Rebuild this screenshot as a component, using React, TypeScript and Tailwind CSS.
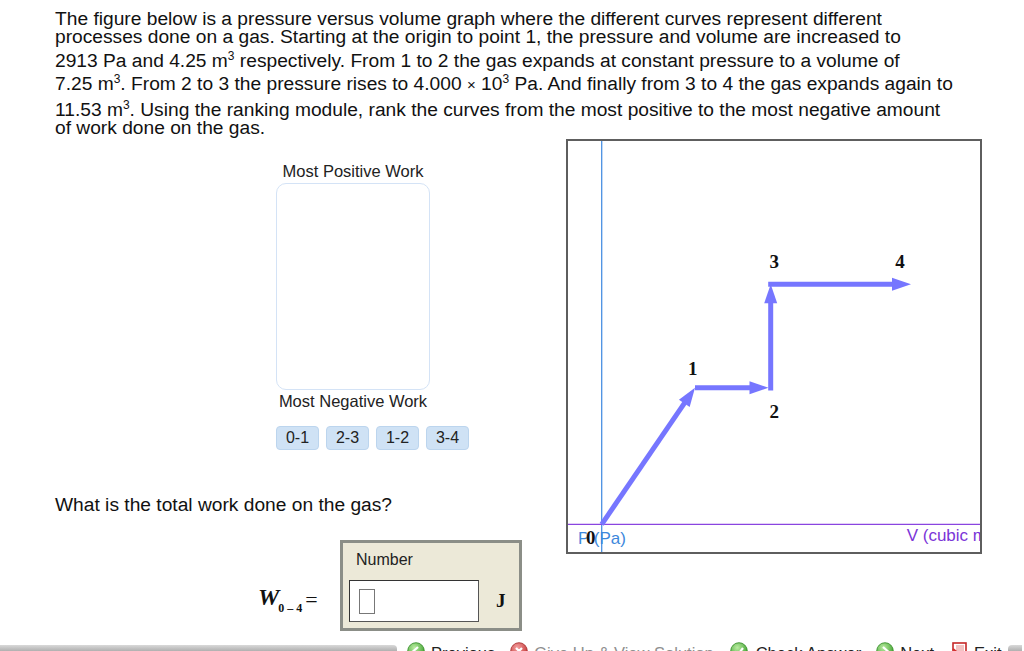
import React from "react";

const ARROW = "#7676ff";

type Seg = { x1: number; y1: number; x2: number; y2: number };

// Thick line ending in a filled triangular head at (x2, y2)
function Arrow({ x1, y1, x2, y2 }: Seg) {
  const len = 19;
  const half = 6.5;
  const dx = x2 - x1;
  const dy = y2 - y1;
  const L = Math.hypot(dx, dy);
  const ux = dx / L;
  const uy = dy / L;
  const bx = x2 - ux * len;
  const by = y2 - uy * len;
  const px = -uy * half;
  const py = ux * half;
  return (
    <g>
      <line
        x1={x1}
        y1={y1}
        x2={x2 - ux * (len - 3)}
        y2={y2 - uy * (len - 3)}
        stroke={ARROW}
        strokeWidth={5}
      />
      <polygon
        points={`${x2},${y2} ${bx + px},${by + py} ${bx - px},${by - py}`}
        fill={ARROW}
      />
    </g>
  );
}

function PVGraph() {
  return (
    <div className="w-[416px] h-[415px] border-2 border-[#5e5e5e] bg-white overflow-hidden shrink-0">
      <svg width="412" height="411" viewBox="0 0 412 411" className="block">
        <line x1="33.7" y1="0" x2="33.7" y2="411" stroke="#4a90e2" strokeWidth="1.3" />
        <line x1="0" y1="383.3" x2="412" y2="383.3" stroke="#8a45e0" strokeWidth="1.3" />
        <Arrow x1={33.7} y1={383.3} x2={127} y2={246.7} />
        <Arrow x1={127} y1={246.7} x2={200.5} y2={246.7} />
        <Arrow x1={202.7} y1={249.5} x2={202.7} y2={143.3} />
        <Arrow x1={200.2} y1={143.3} x2={343} y2={143.3} />
        <g fontFamily="'Liberation Serif', 'Times New Roman', serif" fontWeight="700" fontSize="19" fill="#111" textAnchor="middle">
          <text x="124.7" y="233.5">1</text>
          <text x="206.3" y="277.4">2</text>
          <text x="206.3" y="127.4">3</text>
          <text x="332" y="127.4">4</text>
        </g>
        <text x="10" y="402.8" fontFamily="'Liberation Sans', Arial, sans-serif" fontSize="17" fill="#3d87dc">
          P (Pa)
        </text>
        {/* origin label sits on a white chip over the axis caption */}
        <rect x="18.7" y="388" width="8.3" height="17" fill="#fff" />
        <text x="22.8" y="402.5" textAnchor="middle" fontFamily="'Liberation Serif', 'Times New Roman', serif" fontWeight="700" fontSize="19" fill="#111">
          0
        </text>
        <text x="338.7" y="400" fontFamily="'Liberation Sans', Arial, sans-serif" fontSize="17" fill="#7b35d8">
          V (cubic m)
        </text>
      </svg>
    </div>
  );
}

function Sup({ children }: { children: React.ReactNode }) {
  return <span className="relative -top-[7px] text-[12px] leading-none">{children}</span>;
}

function RoundIcon({ kind }: { kind: "prev" | "giveup" | "check" | "next" }) {
  const red = kind === "giveup";
  const id = `g-${kind}`;
  return (
    <svg width="18" height="18" viewBox="0 0 18 18" className="shrink-0">
      <defs>
        <radialGradient id={id} cx="40%" cy="30%" r="70%">
          <stop offset="0%" stopColor={red ? "#f4a0a0" : "#b9eba0"} />
          <stop offset="100%" stopColor={red ? "#c23434" : "#3c9f2c"} />
        </radialGradient>
      </defs>
      <circle cx="9" cy="9" r="8.3" fill={`url(#${id})`} stroke={red ? "#a52a2a" : "#2f8a22"} strokeWidth="0.8" />
      {kind === "prev" && <path d="M11 5 L6.5 9 L11 13" fill="none" stroke="#fff" strokeWidth="2.2" />}
      {kind === "next" && <path d="M7 5 L11.5 9 L7 13" fill="none" stroke="#fff" strokeWidth="2.2" />}
      {kind === "check" && <path d="M5 9.5 L8 12.5 L13 6" fill="none" stroke="#fff" strokeWidth="2.2" />}
      {kind === "giveup" && <path d="M6 6 L12 12 M12 6 L6 12" fill="none" stroke="#fff" strokeWidth="2.2" />}
    </svg>
  );
}

function ExitIcon() {
  return (
    <svg width="21" height="20" viewBox="0 0 21 20" className="shrink-0">
      <rect x="6" y="1" width="13" height="17" fill="#fff" stroke="#c62828" strokeWidth="1.6" />
      <rect x="9" y="3" width="8" height="13" fill="#f3c2c2" />
      <path d="M1 10 H9 M6 7 L9.5 10 L6 13" fill="none" stroke="#d32f2f" strokeWidth="2.2" />
    </svg>
  );
}

export default function App() {
  return (
    <div className="w-[1024px] h-[651px] overflow-hidden bg-white text-[#111] font-['Liberation_Sans',Arial,sans-serif]">
      <div className="pl-[55px]">
        {/* Problem statement */}
        <div className="pt-[10px] text-[19.2px] leading-[18px] whitespace-nowrap">
          <div>The figure below is a pressure versus volume graph where the different curves represent different</div>
          <div>processes done on a gas. Starting at the origin to point 1, the pressure and volume are increased to</div>
          <div className="mt-[6px]">
            2913 Pa and 4.25 m<Sup>3</Sup> respectively. From 1 to 2 the gas expands at constant pressure to a volume of
          </div>
          <div className="mt-[5px]">
            7.25 m<Sup>3</Sup>. From 2 to 3 the pressure rises to 4.000 <span className="text-[15px]">×</span> 10<Sup>3</Sup> Pa. And finally from 3 to 4 the gas expands again to
          </div>
          <div className="mt-[7px]">
            11.53 m<Sup>3</Sup>. Using the ranking module, rank the curves from the most positive to the most negative amount
          </div>
          <div>of work done on the gas.</div>
        </div>

        <div className="flex mt-[2px]">
          {/* Ranking module and answer entry */}
          <div className="w-[511px] shrink-0">
            <div className="ml-[221px] mt-[22px] w-[154px] flex flex-col items-center text-[16.5px] leading-[20px] text-[#222]">
              <div className="whitespace-nowrap">Most Positive Work</div>
              <div className="mt-[2px] w-[154px] h-[207px] rounded-[10px] border border-[#d4e3f6] bg-white" />
              <div className="mt-[1px] whitespace-nowrap">Most Negative Work</div>
            </div>
            <div className="ml-[221px] mt-[15px] flex gap-[7px]">
              {["0-1", "2-3", "1-2", "3-4"].map((c) => (
                <div
                  key={c}
                  className="w-[43px] h-[24px] rounded-[4px] border border-[#bcd5ee] bg-[#cfe2f5] flex items-center justify-center text-[16px] text-[#222]"
                >
                  {c}
                </div>
              ))}
            </div>

            <div className="mt-[44px] text-[19.2px] leading-[22px] whitespace-nowrap">
              What is the total work done on the gas?
            </div>

            <div className="mt-[24px] flex items-center">
              <div className="ml-[203px] w-[82px] mt-[22px] flex items-baseline font-['Liberation_Serif','Times_New_Roman',serif] font-bold">
                <span className="italic text-[24px]">W</span>
                <span className="relative top-[7px] text-[12px] -ml-[1px]">0 – 4</span>
                <span className="relative top-[2px] text-[22px] font-normal ml-[3px]">=</span>
              </div>
              <div className="w-[182px] h-[91px] border-[3px] border-[#8b8e87] bg-[#ece9d8] pl-[6px] pt-[8px]">
                <div className="ml-[7px] text-[16px] leading-[18px] text-[#222]">Number</div>
                <div className="mt-[11px] flex items-center">
                  <div className="w-[130px] h-[42px] bg-white border border-[#555] border-t-[#333] border-l-[#333] flex items-center pl-[9px]">
                    <div className="w-[16px] h-[25px] border border-[#777] bg-white" />
                  </div>
                  <span className="ml-[17px] font-['Liberation_Serif','Times_New_Roman',serif] font-bold text-[19px]">J</span>
                </div>
              </div>
            </div>
          </div>

          <PVGraph />
        </div>
      </div>

      {/* Navigation bar */}
      <div className="mt-[11px] flex items-start h-[20px] text-[16.5px] leading-[20px] text-[#222] whitespace-nowrap">
        <div className="mt-[3px] w-[397px] h-[14px] rounded-r-[4px] bg-gradient-to-b from-[#d9d9d9] via-[#a9a9a9] to-[#8c8c8c]" />
        <div className="ml-[10px] flex items-start gap-[6px]">
          <RoundIcon kind="prev" />
          <span className="mt-[1px]">Previous</span>
        </div>
        <div className="ml-[15px] flex items-start gap-[6px]">
          <RoundIcon kind="giveup" />
          <span className="mt-[1px] text-[#8f8f8f]">Give Up &amp; View Solution</span>
        </div>
        <div className="ml-[16px] flex items-start gap-[8px]">
          <RoundIcon kind="check" />
          <span className="mt-[1px]">Check Answer</span>
        </div>
        <div className="ml-[15px] flex items-start gap-[6px]">
          <RoundIcon kind="next" />
          <span className="mt-[1px]">Next</span>
        </div>
        <div className="ml-[13px] flex items-start gap-[6px]">
          <ExitIcon />
          <span className="mt-[1px]">Exit</span>
        </div>
        <div className="ml-[6px] mt-[3px] w-[14px] h-[14px] rounded-l-[4px] bg-gradient-to-b from-[#d9d9d9] via-[#a9a9a9] to-[#8c8c8c]" />
      </div>
    </div>
  );
}
